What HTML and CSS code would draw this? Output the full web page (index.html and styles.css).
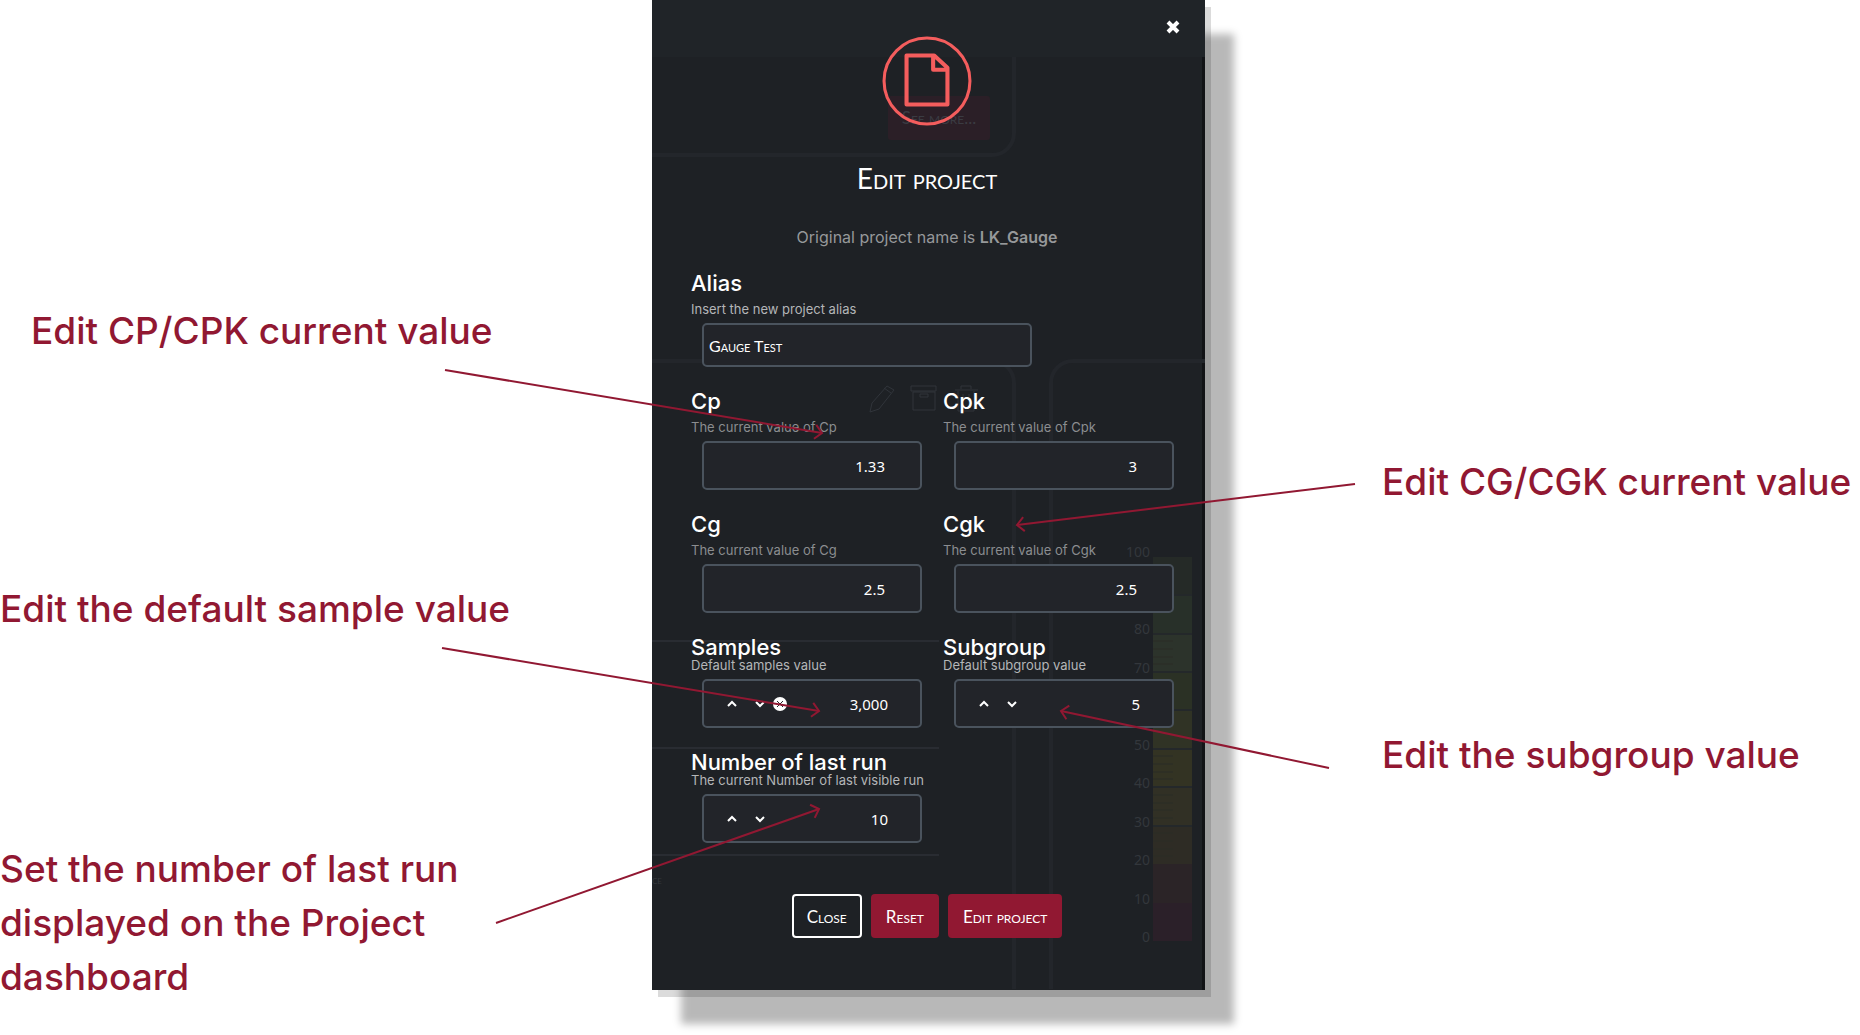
FILE: index.html
```html
<!DOCTYPE html>
<html lang="en">
<head>
    <meta charset="UTF-8">
    <meta name="viewport" content="width=device-width, initial-scale=1.0">
    <title>Edit project</title>
    <link rel="stylesheet" href="styles.css">
</head>
<body>
    <div class="page">
        <div class="notes notes-left">
            <p class="note note-cp">Edit CP/CPK current value</p>
            <p class="note note-sample">Edit the default sample value</p>
            <p class="note note-run">Set the number of last run<br>displayed on the Project<br>dashboard</p>
        </div>

        <main class="panel">
            <!-- dimmed dashboard behind the dialog -->
            <svg class="backdrop" viewBox="0 0 553 989" aria-hidden="true">
                <rect class="band" x="0" y="0" width="553" height="57"/>
                <g class="card">
                    <path d="M0 155H340A22 22 0 0 0 362 133V57"/>
                    <path d="M0 361H340A22 22 0 0 1 362 383V989"/>
                    <path d="M553 361H421A22 22 0 0 0 399 383V989"/>
                </g>
                <rect class="more" x="236" y="96" width="102" height="44" rx="3"/>
                <text class="more-text" x="287" y="124" text-anchor="middle">See more...</text>
                <g class="tools">
                    <path d="M218 412l2-9 15-17 7 4-15 19zM232 388l7 5"/>
                    <path d="M259 386h25v5h-25zM261 392h22v18h-22zM268 394h8v3h-8z"/>
                    <path d="M303 390h23M309 389v-3h10v3M306 391v20h16v-20M311 394v14M317 394v14"/>
                </g>
                <path class="rule" d="M0 641H287M0 748H287M0 855H287"/>
                <text class="tiny" x="0" y="884">ce</text>
                <g class="gauge">
                    <rect x="501" y="557" width="39" height="38" fill="#252a27"/>
                    <rect x="501" y="595" width="39" height="39" fill="#283029"/>
                    <rect x="501" y="634" width="39" height="38" fill="#2c332b"/>
                    <rect x="501" y="672" width="39" height="38" fill="#2b3125"/>
                    <rect x="501" y="710" width="39" height="39" fill="#303325"/>
                    <rect x="501" y="749" width="39" height="38" fill="#333323"/>
                    <rect x="501" y="787" width="39" height="39" fill="#313025"/>
                    <rect x="501" y="826" width="39" height="38" fill="#2e2c25"/>
                    <rect x="501" y="864" width="39" height="39" fill="#2b2427"/>
                    <rect x="501" y="903" width="39" height="38" fill="#2b2029"/>
                    <path class="tick" d="M501 595h39M501 634h39M501 672h39M501 710h39M501 749h39M501 787h39M501 826h39"/>
                    <path class="minor" d="M501 641h20M501 649h20M501 657h20M501 664h20M501 756h20M501 764h20M501 772h20M501 779h20M501 795h20M501 803h20M501 810h20M501 818h20M501 833h20M501 841h20M501 849h20M501 856h20"/>
                </g>
                <g class="scale" text-anchor="end">
                    <text x="498" y="557">100</text>
                    <text x="498" y="634">80</text>
                    <text x="498" y="673">70</text>
                    <text x="498" y="750">50</text>
                    <text x="498" y="788">40</text>
                    <text x="498" y="827">30</text>
                    <text x="498" y="865">20</text>
                    <text x="498" y="904">10</text>
                    <text x="498" y="942">0</text>
                </g>
            </svg>

            <form class="dialog">
                <button class="dismiss" type="button" aria-label="Close dialog">
                    <svg width="16" height="16" viewBox="0 0 16 16"><path d="M3 3l10 10M13 3L3 13"/></svg>
                </button>
                <svg class="file-icon" width="90" height="90" viewBox="0 0 88 88" aria-hidden="true">
                    <circle cx="44" cy="44" r="42"/>
                    <path d="M24 19H51L64 31V67H24zM50 19V33H64"/>
                </svg>
                <h1>Edit project</h1>
                <p class="subtitle">Original project name is <strong>LK_Gauge</strong></p>

                <div class="fields">
                    <div class="field wide">
                        <label for="alias">Alias</label>
                        <small class="strong">Insert the new project alias</small>
                        <div class="box"><input class="alias" id="alias" type="text" value="Gauge Test"></div>
                    </div>
                    <div class="field">
                        <label for="cp">Cp</label>
                        <small>The current value of Cp</small>
                        <div class="box"><input class="decimal" id="cp" type="text" value="1.33"></div>
                    </div>
                    <div class="field">
                        <label for="cpk">Cpk</label>
                        <small>The current value of Cpk</small>
                        <div class="box"><input class="decimal" id="cpk" type="text" value="3"></div>
                    </div>
                    <div class="field">
                        <label for="cg">Cg</label>
                        <small>The current value of Cg</small>
                        <div class="box"><input class="decimal" id="cg" type="text" value="2.5"></div>
                    </div>
                    <div class="field">
                        <label for="cgk">Cgk</label>
                        <small>The current value of Cgk</small>
                        <div class="box"><input class="decimal" id="cgk" type="text" value="2.5"></div>
                    </div>
                    <div class="field compact">
                        <label for="samples">Samples</label>
                        <small class="strong">Default samples value</small>
                        <div class="box spin">
                            <button type="button" aria-label="Increase samples"><svg width="12" height="12" viewBox="0 0 12 12"><path d="M2 8l4-4 4 4"/></svg></button>
                            <button type="button" aria-label="Decrease samples"><svg width="12" height="12" viewBox="0 0 12 12"><path d="M2 4l4 4 4-4"/></svg></button>
                            <button class="clear" type="button" aria-label="Clear samples"><svg width="14" height="14" viewBox="0 0 14 14"><circle cx="7" cy="7" r="7"/><path d="M4 4l6 6M10 4l-6 6"/></svg></button>
                            <input id="samples" type="text" value="3,000">
                        </div>
                    </div>
                    <div class="field compact">
                        <label for="subgroup">Subgroup</label>
                        <small class="strong">Default subgroup value</small>
                        <div class="box spin">
                            <button type="button" aria-label="Increase subgroup"><svg width="12" height="12" viewBox="0 0 12 12"><path d="M2 8l4-4 4 4"/></svg></button>
                            <button type="button" aria-label="Decrease subgroup"><svg width="12" height="12" viewBox="0 0 12 12"><path d="M2 4l4 4 4-4"/></svg></button>
                            <input id="subgroup" type="text" value="5">
                        </div>
                    </div>
                    <div class="field compact">
                        <label for="last-run">Number of last run</label>
                        <small class="strong">The current Number of last visible run</small>
                        <div class="box spin">
                            <button type="button" aria-label="Increase last run"><svg width="12" height="12" viewBox="0 0 12 12"><path d="M2 8l4-4 4 4"/></svg></button>
                            <button type="button" aria-label="Decrease last run"><svg width="12" height="12" viewBox="0 0 12 12"><path d="M2 4l4 4 4-4"/></svg></button>
                            <input id="last-run" type="text" value="10">
                        </div>
                    </div>
                </div>

                <div class="actions">
                    <button class="btn btn-outline" type="button">Close</button>
                    <button class="btn" type="reset">Reset</button>
                    <button class="btn" type="submit">Edit project</button>
                </div>
            </form>
        </main>

        <div class="notes notes-right">
            <p class="note note-cg">Edit CG/CGK current value</p>
            <p class="note note-subgroup">Edit the subgroup value</p>
        </div>

        <!-- arrows from the notes to the fields -->
        <svg class="arrows" viewBox="0 0 1860 1035" aria-hidden="true">
            <defs>
                <marker id="head" viewBox="-10 -10 12 20" refX="0" refY="0" markerWidth="12" markerHeight="20" markerUnits="userSpaceOnUse" orient="auto">
                    <path d="M-7 -7L0 0L-7 7"/>
                </marker>
            </defs>
            <path marker-end="url(#head)" d="M445 370L822 433"/>
            <path marker-end="url(#head)" d="M1355 484L1017 525"/>
            <path marker-end="url(#head)" d="M442 648L819 711"/>
            <path marker-end="url(#head)" d="M1329 768L1061 711"/>
            <path marker-end="url(#head)" d="M496 923L819 809"/>
        </svg>
    </div>
</body>
</html>
```
FILE: styles.css
```css
* {
    box-sizing: border-box;
}

body {
    margin: 0;
    background: #fff;
    color: #fff;
    font-family: Inter, "Liberation Sans", sans-serif;
}

.page {
    position: relative;
    display: grid;
    grid-template-columns: minmax(0, 652fr) minmax(0, 553fr) minmax(0, 655fr);
    align-items: start;
    min-height: 100vh;
    overflow: hidden;
}

/* notes */
.notes {
    display: flex;
    flex-direction: column;
    color: #911832;
    font-size: 37px;
    font-weight: 500;
    line-height: 54px;
    white-space: nowrap;
}

.notes-left {
    padding-top: 304px;
    gap: 206px;
}

.notes-right {
    padding: 455px 0 0 177px;
    gap: 219px;
}

.note {
    margin: 0;
}

.note-cp {
    padding: 0 0 18px 31px;
}

/* panel */
.panel {
    position: relative;
    background: #1e2125;
    border-right: 3px solid #121316;
    box-shadow: 6px 7px 0 rgba(0, 0, 0, 0.14), 29px 34px 8px rgba(0, 0, 0, 0.28);
}

.backdrop {
    position: absolute;
    top: 0;
    left: 0;
    width: 553px;
    height: 989px;
    fill: none;
}

.band {
    fill: #202428;
}

.card {
    stroke: #23262b;
    stroke-width: 4;
}

.more {
    fill: #2b1f27;
}

.more-text,
.tiny {
    fill: #3a3b42;
    font-family: Lato, sans-serif;
    font-size: 17px;
    font-variant: small-caps;
}

.tiny {
    fill: #33373c;
    font-size: 11px;
}

.tools {
    stroke: #30343a;
}

.rule {
    stroke: #343940;
}

.tick {
    stroke: #24282a;
    stroke-width: 2;
}

.minor {
    stroke: #2a2d26;
}

.scale {
    fill: #33373c;
    font-family: "Noto Sans", sans-serif;
    font-size: 14px;
}

/* dialog */
.dialog {
    position: relative;
    display: flex;
    flex-direction: column;
    align-items: center;
    padding: 36px 0 52px;
}

.dialog button {
    cursor: pointer;
}

.dismiss {
    position: absolute;
    top: 19px;
    right: 21px;
    width: 16px;
    height: 16px;
    padding: 0;
    border: 0;
    background: none;
}

.dismiss svg {
    display: block;
    stroke: #fff;
    stroke-width: 4;
}

.file-icon {
    fill: none;
    stroke: #f45d5d;
    stroke-width: 3;
    stroke-linejoin: round;
}

.file-icon path {
    stroke-width: 4;
}

h1 {
    margin: 34px 0 0;
    font-family: Lato, sans-serif;
    font-size: 28px;
    font-weight: 400;
    line-height: 36px;
    font-variant: small-caps;
}

.subtitle {
    margin: 29px 0 0;
    color: #96989a;
    font-size: 16px;
    line-height: 24px;
}

.subtitle strong {
    font-weight: 600;
}

.fields {
    display: grid;
    grid-template-columns: 1fr 1fr;
    row-gap: 22px;
    align-self: stretch;
    padding: 22px 7px 0 39px;
}

.field {
    display: flex;
    flex-direction: column;
    min-width: 0;
    white-space: nowrap;
}

.wide {
    grid-column: 1 / -1;
}

.field label {
    margin-bottom: 6px;
    font-size: 22px;
    font-weight: 500;
    line-height: 24px;
}

.compact label {
    margin-bottom: -2px;
}

.field small {
    margin-bottom: 6px;
    color: #8b8d90;
    font-size: 13px;
    line-height: 16px;
}

.field .strong {
    color: #b4b6b8;
}

.box {
    display: flex;
    align-items: center;
    height: 49px;
    margin: 0 21px 0 11px;
    border: 2px solid #4a535d;
    border-radius: 5px;
    background: #222429;
}

.wide .box {
    width: 330px;
    height: 44px;
}

.box input {
    flex: 1;
    min-width: 0;
    padding: 0 32px 0 0;
    border: 0;
    outline: 0;
    background: none;
    color: #fff;
    font-family: "Noto Sans", sans-serif;
    font-size: 15px;
    text-align: right;
}

.box .decimal {
    padding-right: 35px;
}

.box .alias {
    padding: 0 5px;
    font-family: Lato, sans-serif;
    font-size: 16px;
    font-variant: small-caps;
    text-align: left;
}

.spin {
    gap: 16px;
    padding-left: 22px;
}

.spin button {
    flex: none;
    padding: 0;
    border: 0;
    background: none;
}

.spin svg {
    display: block;
    fill: none;
    stroke: #fff;
    stroke-width: 2;
}

.spin .clear {
    margin-left: -9px;
}

.spin .clear svg {
    fill: #fff;
    stroke: #222429;
    stroke-width: 1;
}

.spin .clear circle {
    stroke: none;
}

.actions {
    display: flex;
    gap: 9px;
    margin-top: 51px;
}

.btn {
    height: 44px;
    padding: 0 13px;
    border: 2px solid #911832;
    border-radius: 4px;
    background: #911832;
    color: #fff;
    font-family: Lato, sans-serif;
    font-size: 17px;
    font-variant: small-caps;
}

.btn-outline {
    border-color: #fff;
    background: none;
}

.arrows {
    position: absolute;
    top: 0;
    left: 0;
    width: 100%;
    fill: none;
    stroke: #911832;
    stroke-width: 2;
    pointer-events: none;
}
```
